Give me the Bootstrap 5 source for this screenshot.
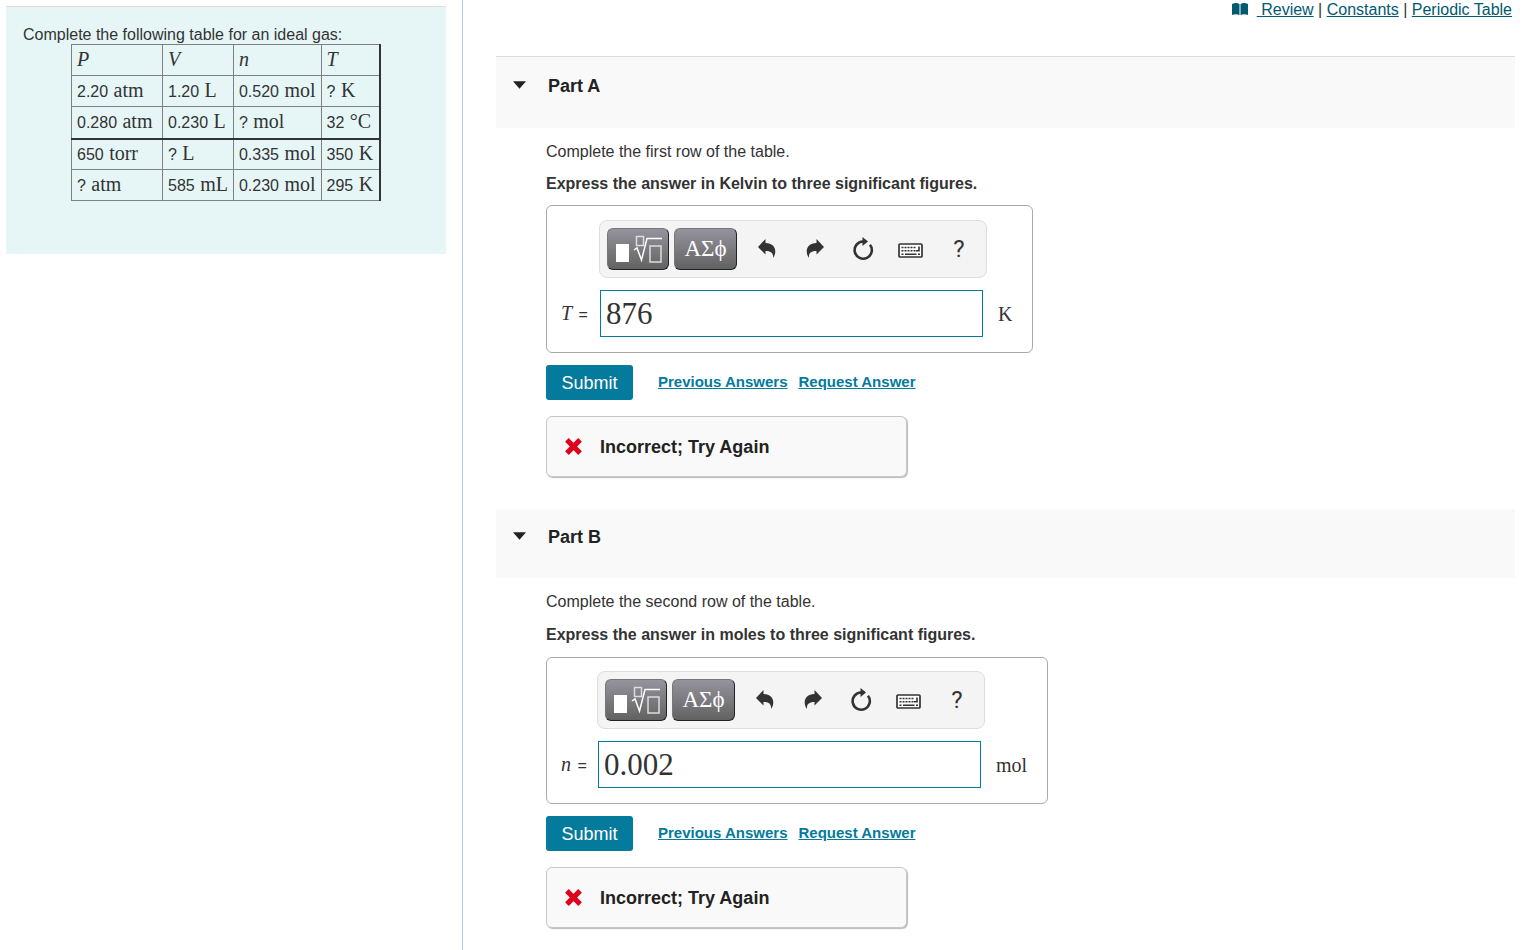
<!DOCTYPE html>
<html lang="en">
<head>
<meta charset="utf-8">
<meta name="viewport" content="width=device-width, initial-scale=1">
<title>Ideal gas table</title>
<link href="https://cdn.jsdelivr.net/npm/bootstrap@5.3.0/dist/css/bootstrap.min.css" rel="stylesheet">
<style>
  body { font-family: "Liberation Sans", Arial, sans-serif; font-size: 16px; line-height: 20px; color: #333; background: #fff; }
  .problem-pane { flex: 0 0 463px; padding: 6px 16px 0 6px; border-right: 1px solid #b9cbdc; }
  .problem-card { background: #e6f6f7; border-top: 1px solid #ddd; padding: 18px 16px 53px 17px; }
  .gas-table { margin: -1px 0 0 48px; border-collapse: collapse; border: 1px solid #808080; border-right: 2px solid #333; }
  .gas-table th, .gas-table td { height: 31px; padding: 0 5px; border: 1px solid #808080; font-weight: 400; white-space: nowrap; vertical-align: middle; }
  .gas-table th { padding-bottom: 3px; }
  .gas-table th:first-child { width: 91px; }
  .gas-table td .math { margin-left: 1px; }
  .gas-table th:last-child, .gas-table td:last-child { width: 59px; border-right: 2px solid #333; }
  .gas-table .row-break td { height: 32px; border-bottom: 2px solid #333; }
  .math { font-family: "Liberation Serif", serif; font-size: 20px; line-height: 20px; }
  .answer-pane { min-width: 0; padding: 0 15px 22px 33px; }
  .tools { height: 56px; padding-right: 3px; }
  .tools a { color: #005a70; }
  .tools svg { vertical-align: -1px; }
  .part-head { background: #f9f9f9; height: 69px; padding: 17px 17px 0; gap: 22px; }
  .part-head.first { border-top: 1px solid #ddd; height: 72px; padding-top: 18px; }
  .part-head h2 { font-size: 18px; line-height: 22px; font-weight: 700; color: #222; margin: 0; }
  .fold { border: 0; background: none; padding: 0; width: 13px; height: 20px; line-height: 0; }
  .part-body { padding: 14px 0 0 50px; }
  .part-body p { margin: 0 0 12px; }
  .part-body .directions { margin-bottom: 11px; font-weight: 700; }
  .part-b { margin-top: 32px; }
  .part-b .part-body p { margin-bottom: 13px; }
  .part-b .part-body .directions { margin-bottom: 12px; }
  .entry { display: grid; width: fit-content; grid-template-columns: 38px 388px auto; row-gap: 12px; align-items: center; border: 1px solid #aaa; border-radius: 6px; padding: 14px 20px 15px 14px; }
  .part-b .entry { grid-template-columns: 36px 388px auto; padding-top: 13px; }
  .entry label, .value, .unit { grid-row: 2; }
  .entry label i { margin-right: 2px; }
  .mathbar { grid-column: 2; height: 58px; padding-left: 7px; background: #f4f4f4; border: 1px solid #ddd; border-radius: 8px; }
  .palette { display: flex; align-items: center; justify-content: center; flex: none; height: 42px; width: 62px; padding: 0 0 1px; margin-right: 5px; color: #fff; border: 1px solid #777; border-right-color: #222; border-bottom-color: #222; border-radius: 6px; background: linear-gradient(#95939c, #626262); font: 23px/38px "Liberation Serif", serif; }
  .palette.greek { width: 63px; margin-right: 6px; }
  .tool { flex: none; width: 48px; height: 42px; padding: 0; border: 0; background: none; color: #333; line-height: 0; }
  .tool.help { font: 24px/40px Roboto, sans-serif; }
  .tool.keys { padding-top: 4px; }
  .value { width: 383px; height: 47px; margin-left: 1px; padding: 0 5px; border: 1px solid #047a9c; color: #333; font: 31px/45px "Liberation Serif", serif; outline: 0; }
  .unit { padding-left: 11px; }
  .submit { width: 87px; height: 35px; padding: 0; margin-right: 14px; border: 0; border-radius: 3px; background: #047a9c; color: #fff; font-size: 18px; line-height: 34px; }
  .submit:hover { background: #036683; color: #fff; }
  .actions { gap: 11px; margin-top: 12px; }
  .actions a { color: #047a9c; font-weight: 700; font-size: 15px; padding-bottom: 1px; }
  .verdict { width: 361px; max-width: 100%; height: 61px; margin-top: 16px; padding: 0 18px; gap: 18px; border: 1px solid #c7c7c7; border-radius: 6px; background: #f9f9f9; box-shadow: 1px 1px 1px #bbb; color: #222; font-size: 18px; font-weight: 700; }
</style>
</head>
<body>
<svg class="d-none" aria-hidden="true">
  <symbol id="i-fold" viewBox="0 0 14 8"><path fill="#222" d="M0 0h14L7 8z"/></symbol>
  <symbol id="i-undo" viewBox="0 0 18 20"><path fill="#333" d="M7.500 0v4C14 4 17.300 8 17.300 12.500c0 2.500-.8 4.500-2.300 6.500.5-5-2-7-7.500-7v3.500L0 8z"/></symbol>
  <symbol id="i-reset" viewBox="0 0 22 24"><path fill="none" stroke="#333" stroke-width="2.600" d="M12 4.500H11A8.600 8.600 0 1 0 18 7.800"/><path fill="#333" d="M10.500 0l5.500 4.500-5.500 4.500z"/></symbol>
  <symbol id="i-keys" viewBox="0 0 26 16"><rect x="1" y="1" width="23" height="13" rx="1" fill="#fff" stroke="#333" stroke-width="1.700"/><path fill="none" stroke="#333" stroke-width="1.600" stroke-dasharray="2 1" d="M3.500 4.500h15M3.500 7.800h15"/><path fill="none" stroke="#333" stroke-width="1.600" d="M21 3.500v4.300h-3M3.500 11.300h2M7 11.300h11.500M20 11.300h2"/></symbol>
  <symbol id="i-root" viewBox="0 0 48 28"><path fill="#fff" d="M2 9h13v18H2z"/><path fill="none" stroke="#ddd" stroke-width="1.500" d="M22.500 1.500h7v9h-7zM36 11h11v16H36z"/><path fill="none" stroke="#fff" stroke-width="1.500" d="M20 15l3-2 4.500 12L33 3.500h15"/></symbol>
  <symbol id="i-cross" viewBox="0 0 18 18"><path stroke="#e0001b" stroke-width="5.500" stroke-linecap="square" stroke-linejoin="round" d="M4 4l10 10M14 4L4 14"/></symbol>
  <symbol id="i-book" viewBox="0 0 16 13"><path fill="#005a70" d="M0 1q4-2 7.500 0v11Q4 10.500 0 12zM8.500 1Q12-1 16 1v11q-4-1.500-7.500 0z"/></symbol>
</svg>
<div class="d-flex min-vh-100">
  <aside class="problem-pane">
    <section class="problem-card">
      <div>Complete the following table for an ideal gas:</div>
      <table class="gas-table">
        <thead><tr><th class="math"><i>P</i></th><th class="math"><i>V</i></th><th class="math"><i>n</i></th><th class="math"><i>T</i></th></tr></thead>
        <tbody>
          <tr><td>2.20 <span class="math">atm</span></td><td>1.20 <span class="math">L</span></td><td>0.520 <span class="math">mol</span></td><td>? <span class="math">K</span></td></tr>
          <tr class="row-break"><td>0.280 <span class="math">atm</span></td><td>0.230 <span class="math">L</span></td><td>? <span class="math">mol</span></td><td>32 <span class="math">°C</span></td></tr>
          <tr><td>650 <span class="math">torr</span></td><td>? <span class="math">L</span></td><td>0.335 <span class="math">mol</span></td><td>350 <span class="math">K</span></td></tr>
          <tr><td>? <span class="math">atm</span></td><td>585 <span class="math">mL</span></td><td>0.230 <span class="math">mol</span></td><td>295 <span class="math">K</span></td></tr>
        </tbody>
      </table>
    </section>
  </aside>
  <main class="answer-pane flex-grow-1">
    <nav class="tools text-end"><svg width="16" height="13" class="me-1"><use href="#i-book"/></svg> <a href="#">&nbsp;Review</a> | <a href="#">Constants</a> | <a href="#">Periodic Table</a></nav>

    <section>
      <header class="part-head first d-flex align-items-start">
        <button class="fold" type="button" aria-label="Collapse Part A"><svg width="13" height="8"><use href="#i-fold"/></svg></button>
        <h2>Part A</h2>
      </header>
      <form class="part-body">
        <p>Complete the first row of the table.</p>
        <p class="directions">Express the answer in Kelvin to three significant figures.</p>
        <div class="entry">
          <div class="mathbar d-flex align-items-center">
            <button class="palette" type="button" aria-label="Templates"><svg width="48" height="28"><use href="#i-root"/></svg></button>
            <button class="palette greek" type="button">ΑΣϕ</button>
            <button class="tool" type="button" aria-label="Undo"><svg width="18" height="20"><use href="#i-undo"/></svg></button>
            <button class="tool" type="button" aria-label="Redo"><svg width="18" height="20"><use href="#i-undo" transform="matrix(-1 0 0 1 18 0)"/></svg></button>
            <button class="tool" type="button" aria-label="Reset"><svg width="22" height="24"><use href="#i-reset"/></svg></button>
            <button class="tool keys" type="button" aria-label="Keyboard shortcuts"><svg width="26" height="16"><use href="#i-keys"/></svg></button>
            <button class="tool help" type="button">?</button>
          </div>
          <label for="temp"><i class="math">T</i> =</label>
          <input class="value" id="temp" type="text" value="876">
          <span class="unit math">K</span>
        </div>
        <div class="actions d-flex align-items-center">
          <button class="submit btn" type="button">Submit</button>
          <a href="#">Previous Answers</a><a href="#">Request Answer</a>
        </div>
        <div class="verdict d-flex align-items-center"><svg width="17" height="17"><use href="#i-cross"/></svg>Incorrect; Try Again</div>
      </form>
    </section>

    <section class="part-b">
      <header class="part-head d-flex align-items-start">
        <button class="fold" type="button" aria-label="Collapse Part B"><svg width="13" height="8"><use href="#i-fold"/></svg></button>
        <h2>Part B</h2>
      </header>
      <form class="part-body">
        <p>Complete the second row of the table.</p>
        <p class="directions">Express the answer in moles to three significant figures.</p>
        <div class="entry">
          <div class="mathbar d-flex align-items-center">
            <button class="palette" type="button" aria-label="Templates"><svg width="48" height="28"><use href="#i-root"/></svg></button>
            <button class="palette greek" type="button">ΑΣϕ</button>
            <button class="tool" type="button" aria-label="Undo"><svg width="18" height="20"><use href="#i-undo"/></svg></button>
            <button class="tool" type="button" aria-label="Redo"><svg width="18" height="20"><use href="#i-undo" transform="matrix(-1 0 0 1 18 0)"/></svg></button>
            <button class="tool" type="button" aria-label="Reset"><svg width="22" height="24"><use href="#i-reset"/></svg></button>
            <button class="tool keys" type="button" aria-label="Keyboard shortcuts"><svg width="26" height="16"><use href="#i-keys"/></svg></button>
            <button class="tool help" type="button">?</button>
          </div>
          <label for="moles"><i class="math">n</i> =</label>
          <input class="value" id="moles" type="text" value="0.002">
          <span class="unit math">mol</span>
        </div>
        <div class="actions d-flex align-items-center">
          <button class="submit btn" type="button">Submit</button>
          <a href="#">Previous Answers</a><a href="#">Request Answer</a>
        </div>
        <div class="verdict d-flex align-items-center"><svg width="17" height="17"><use href="#i-cross"/></svg>Incorrect; Try Again</div>
      </form>
    </section>
  </main>
</div>
<script src="https://cdn.jsdelivr.net/npm/bootstrap@5.3.0/dist/js/bootstrap.bundle.min.js"></script>
</body>
</html>
